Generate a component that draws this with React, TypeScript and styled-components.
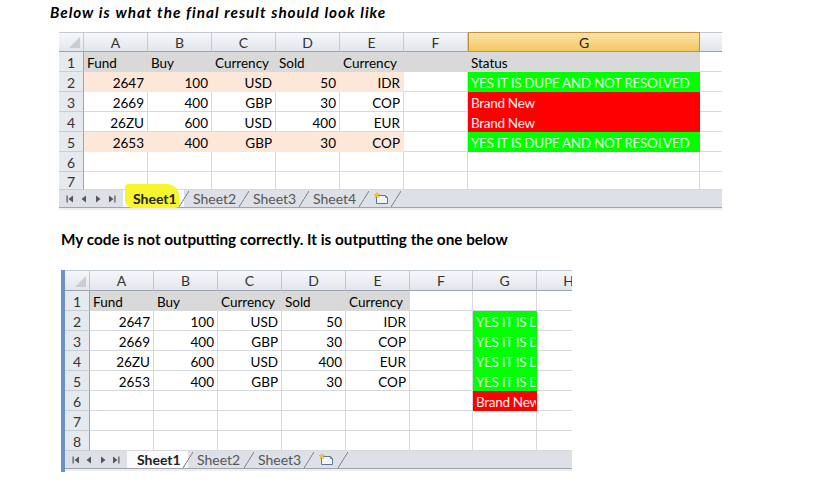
import React from 'react';
import styled, { createGlobalStyle, css } from 'styled-components';

const Global = createGlobalStyle`
  html, body { margin: 0; padding: 0; background: #fff; }
  body { font-family: Lato, "Liberation Sans", sans-serif; }
`;

const Page = styled.div`
  display: flex;
  flex-direction: column;
  width: 819px;
  height: 482px;
  overflow: hidden;
`;

const Title = styled.h1<{ $italic?: boolean; $indent: number; $pt: number; $pb: number }>`
  margin: 0;
  padding: ${p => p.$pt}px 0 ${p => p.$pb}px ${p => p.$indent}px;
  font-family: Lato, "Liberation Sans", sans-serif;
  font-style: ${p => (p.$italic ? 'italic' : 'normal')};
  font-weight: 700;
  font-size: 15.3px;
  letter-spacing: ${p => (p.$italic ? '0.95px' : '0')};
  word-spacing: ${p => (p.$italic ? '0.5px' : '0')};
  line-height: 18px;
  color: #000;
`;

const Sheet = styled.div<{ $indent: number; $width: number; $bar?: boolean }>`
  margin-left: ${p => p.$indent}px;
  width: ${p => p.$width}px;
  box-sizing: border-box;
  overflow: hidden;
  align-self: flex-start;
  display: flex;
  flex-direction: column;
  ${p => p.$bar && css`border-left: 4px solid #6a94c9;`}
`;

const Grid = styled.div<{ $cols: string; $rows: string }>`
  display: grid;
  grid-template-columns: ${p => p.$cols};
  grid-template-rows: ${p => p.$rows};
  font-family: Lato, "Liberation Sans", sans-serif;
  font-size: 13.5px;
`;

const ColHead = styled.div<{ $selected?: boolean }>`
  box-sizing: border-box;
  display: flex;
  align-items: center;
  justify-content: center;
  color: #333;
  font-size: 14px;
  background: linear-gradient(#f6f7f9, #e2e6ec);
  border-right: 1px solid #c3c9d1;
  border-bottom: 1px solid #9aa3ae;
  border-top: 1px solid #c3c9d1;
  ${p =>
    p.$selected &&
    css`
      background: linear-gradient(#fbe3a6, #f3c760);
      border: 1px solid #c4913a;
      border-bottom-color: #c4913a;
      color: #222;
    `}
`;

const Corner = styled.div`
  box-sizing: border-box;
  position: relative;
  background: linear-gradient(#f6f7f9, #e2e6ec);
  border-right: 1px solid #c3c9d1;
  border-bottom: 1px solid #9aa3ae;
  border-top: 1px solid #c3c9d1;
  &::after {
    content: '';
    position: absolute;
    right: 3px;
    bottom: 3px;
    width: 0;
    height: 0;
    border-left: 11px solid transparent;
    border-bottom: 11px solid #c9ced5;
  }
`;

const RowHead = styled.div`
  box-sizing: border-box;
  display: flex;
  align-items: center;
  justify-content: center;
  padding-top: 2px;
  color: #333;
  font-size: 14px;
  background: #e6eaef;
  border-right: 1px solid #9aa3ae;
  border-bottom: 1px solid #c8ced6;
`;

const Cell = styled.div<{ $fill?: string; $align?: 'left' | 'right'; $ink?: string; $tight?: boolean }>`
  box-sizing: border-box;
  display: flex;
  align-items: center;
  justify-content: ${p => (p.$align === 'right' ? 'flex-end' : 'flex-start')};
  padding: 2px 3px 0;
  white-space: nowrap;
  overflow: hidden;
  letter-spacing: ${p => (p.$tight ? '-0.3px' : '0')};
  color: ${p => p.$ink ?? '#000'};
  background: ${p => p.$fill ?? '#fff'};
  border-right: 1px solid ${p => p.$fill ?? '#d6dade'};
  border-bottom: 1px solid ${p => p.$fill ?? '#d6dade'};
`;

const TabBar = styled.div`
  display: flex;
  align-items: stretch;
  height: 17px;
  background: #dde1e7;
  border-bottom: 1px solid #9ea5ae;
  box-shadow: 0 2px 0 #eceef1;
  margin-bottom: 3px;
  font-family: Lato, "Liberation Sans", sans-serif;
  font-size: 14px;
`;

const Nav = styled.div<{ $w: number }>`
  display: flex;
  align-items: center;
  justify-content: space-around;
  width: ${p => p.$w}px;
  flex-shrink: 0;
  padding: 0 4px;
  box-sizing: border-box;
`;

const Tab = styled.div<{ $w: number; $active?: boolean; $highlight?: boolean }>`
  position: relative;
  width: ${p => p.$w}px;
  flex-shrink: 0;
  box-sizing: border-box;
  display: flex;
  align-items: center;
  padding-left: ${p => (p.$active ? 10 : 9)}px;
  color: ${p => (p.$active ? '#222' : '#555')};
  font-weight: ${p => (p.$active ? 700 : 400)};
  background: ${p => (p.$active ? '#fbfbfc' : 'transparent')};
  ${p =>
    p.$highlight &&
    css`
      &::before {
        content: '';
        position: absolute;
        left: 2px;
        right: 5px;
        top: -6px;
        bottom: -1px;
        background: #f6f52e;
        border-radius: 3px 12px 4px 8px;
      }
    `}
  &::after {
    content: '';
    position: absolute;
    right: -5px;
    top: 1px;
    bottom: 0;
    width: 10px;
    background: linear-gradient(
      to bottom right,
      transparent calc(50% - 0.7px),
      #8b929b calc(50% - 0.3px),
      #8b929b calc(50% + 0.3px),
      transparent calc(50% + 0.7px)
    );
  }
`;

const TabLabel = styled.span`
  position: relative;
  line-height: 16px;
`;

const NavIcon: React.FC<{ kind: 'first' | 'prev' | 'next' | 'last' }> = ({ kind }) => (
  <svg width="8" height="8" viewBox="0 0 8 8">
    {kind === 'first' && (
      <>
        <rect x="0.5" y="0.5" width="1.2" height="7" fill="#555" />
        <path d="M7 0.5 L2.5 4 L7 7.5 Z" fill="#555" />
      </>
    )}
    {kind === 'prev' && <path d="M6 0.5 L1.5 4 L6 7.5 Z" fill="#555" />}
    {kind === 'next' && <path d="M2 0.5 L6.5 4 L2 7.5 Z" fill="#555" />}
    {kind === 'last' && (
      <>
        <path d="M1 0.5 L5.5 4 L1 7.5 Z" fill="#555" />
        <rect x="6.3" y="0.5" width="1.2" height="7" fill="#555" />
      </>
    )}
  </svg>
);

const NewSheetIcon: React.FC = () => (
  <svg width="16" height="13" viewBox="0 0 16 13">
    <path d="M3.5 3.5 H12.5 L14.5 5.5 V11.5 H3.5 Z" fill="#f1f5fb" stroke="#5f7596" strokeWidth="1" />
    <path d="M12.5 3.5 V5.5 H14.5" fill="none" stroke="#5f7596" strokeWidth="0.8" />
    <path
      d="M4 0.5 L4.8 2.4 L6.8 2.5 L5.3 3.8 L5.8 5.8 L4 4.7 L2.2 5.8 L2.7 3.8 L1.2 2.5 L3.2 2.4 Z"
      fill="#f5c828"
      stroke="#d49a10"
      strokeWidth="0.4"
    />
  </svg>
);

type CellSpec = { text?: string; fill?: string; align?: 'left' | 'right'; ink?: string };

const PEACH = '#fde7d8';
const GRAY = '#d9d9d9';
const GREEN = '#00ff00';
const RED = '#ff0000';
const GREEN_INK = '#e4fbe4';
const RED_INK = '#fff3f3';

const num = (t: string, fill?: string): CellSpec => ({ text: t, align: 'right', fill });
const dupe: CellSpec = { text: 'YES IT IS DUPE AND NOT RESOLVED', fill: GREEN, ink: GREEN_INK };
const brandNew: CellSpec = { text: 'Brand New', fill: RED, ink: RED_INK };
const blank = (n: number): CellSpec[] => Array.from({ length: n }, () => ({}));

const topRows: CellSpec[][] = [
  [
    { text: 'Fund', fill: GRAY },
    { text: 'Buy', fill: GRAY },
    { text: 'Currency', fill: GRAY },
    { text: 'Sold', fill: GRAY },
    { text: 'Currency', fill: GRAY },
    { fill: GRAY },
    { text: 'Status', fill: GRAY },
    {},
  ],
  [num('2647', PEACH), num('100', PEACH), num('USD', PEACH), num('50', PEACH), num('IDR', PEACH), {}, dupe, {}],
  [num('2669'), num('400'), num('GBP'), num('30'), num('COP'), {}, brandNew, {}],
  [num('26ZU'), num('600'), num('USD'), num('400'), num('EUR'), {}, brandNew, {}],
  [num('2653', PEACH), num('400', PEACH), num('GBP', PEACH), num('30', PEACH), num('COP', PEACH), {}, dupe, {}],
  blank(8),
  blank(8),
];

const bottomRows: CellSpec[][] = [
  [
    { text: 'Fund', fill: GRAY },
    { text: 'Buy', fill: GRAY },
    { text: 'Currency', fill: GRAY },
    { text: 'Sold', fill: GRAY },
    { text: 'Currency', fill: GRAY },
    {},
    {},
    {},
  ],
  [num('2647'), num('100'), num('USD'), num('50'), num('IDR'), {}, dupe, {}],
  [num('2669'), num('400'), num('GBP'), num('30'), num('COP'), {}, dupe, {}],
  [num('26ZU'), num('600'), num('USD'), num('400'), num('EUR'), {}, dupe, {}],
  [num('2653'), num('400'), num('GBP'), num('30'), num('COP'), {}, dupe, {}],
  [{}, {}, {}, {}, {}, {}, brandNew, {}],
  blank(8),
  blank(8),
];

type SheetProps = {
  cols: string;
  rows: string;
  letters: string[];
  selected?: string;
  data: CellSpec[][];
};

const SheetGrid: React.FC<SheetProps> = ({ cols, rows, letters, selected, data }) => (
  <Grid $cols={cols} $rows={rows}>
    <Corner />
    {letters.map((l, i) => (
      <ColHead key={i} $selected={l === selected}>
        {l}
      </ColHead>
    ))}
    {data.map((row, r) => (
      <React.Fragment key={r}>
        <RowHead>{r + 1}</RowHead>
        {row.map((c, i) => (
          <Cell key={i} $fill={c.fill} $align={c.align} $ink={c.ink} $tight={c.fill === GREEN || c.fill === RED}>
            {c.text}
          </Cell>
        ))}
      </React.Fragment>
    ))}
  </Grid>
);

const Navigation: React.FC<{ w: number }> = ({ w }) => (
  <Nav $w={w}>
    <NavIcon kind="first" />
    <NavIcon kind="prev" />
    <NavIcon kind="next" />
    <NavIcon kind="last" />
  </Nav>
);

export default function App() {
  return (
    <Page>
      <Global />
      <Title $italic $indent={50} $pt={3} $pb={11}>
        Below is what the final result should look like
      </Title>
      <Sheet $indent={59} $width={663}>
        <SheetGrid
          cols="25px repeat(6, 64px) 232px 64px"
          rows="20px repeat(6, 20px) 18px"
          letters={['A', 'B', 'C', 'D', 'E', 'F', 'G', '']}
          selected="G"
          data={topRows}
        />
        <TabBar>
          <Navigation w={64} />
          <Tab $w={61} $active $highlight>
            <TabLabel>Sheet1</TabLabel>
          </Tab>
          <Tab $w={60}>
            <TabLabel>Sheet2</TabLabel>
          </Tab>
          <Tab $w={60}>
            <TabLabel>Sheet3</TabLabel>
          </Tab>
          <Tab $w={60}>
            <TabLabel>Sheet4</TabLabel>
          </Tab>
          <Tab $w={32}>
            <NewSheetIcon />
          </Tab>
        </TabBar>
      </Sheet>
      <Title $indent={61} $pt={19} $pb={22}>
        My code is not outputting correctly. It is outputting the one below
      </Title>
      <Sheet $indent={61} $width={511} $bar>
        <SheetGrid
          cols="25px repeat(5, 64px) 63px 64px 64px"
          rows="21px repeat(8, 20px)"
          letters={['A', 'B', 'C', 'D', 'E', 'F', 'G', 'H']}
          data={bottomRows}
        />
        <TabBar>
          <Navigation w={62} />
          <Tab $w={61} $active>
            <TabLabel>Sheet1</TabLabel>
          </Tab>
          <Tab $w={61}>
            <TabLabel>Sheet2</TabLabel>
          </Tab>
          <Tab $w={60}>
            <TabLabel>Sheet3</TabLabel>
          </Tab>
          <Tab $w={34}>
            <NewSheetIcon />
          </Tab>
        </TabBar>
      </Sheet>
    </Page>
  );
}
